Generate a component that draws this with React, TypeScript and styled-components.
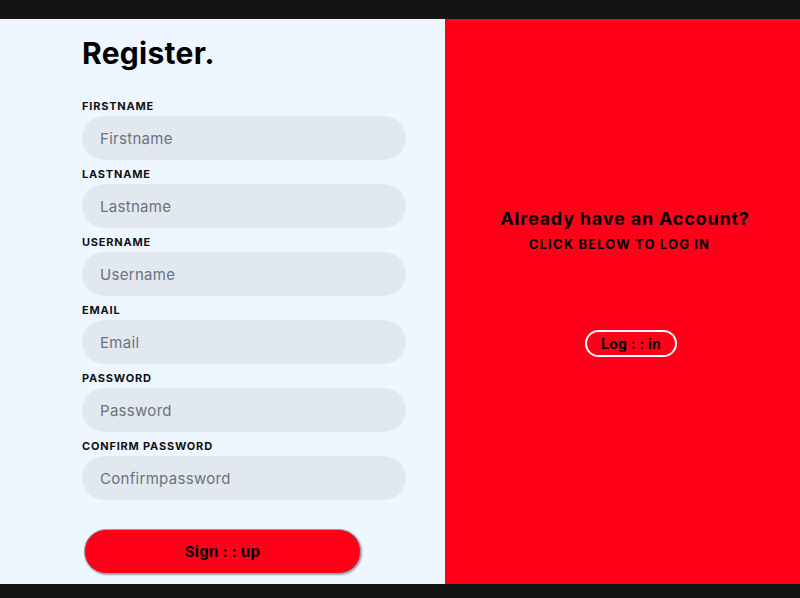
import React from "react";
import styled, { createGlobalStyle } from "styled-components";

const GlobalStyle = createGlobalStyle`
  * { box-sizing: border-box; }
  html, body { margin: 0; padding: 0; background: #141414; }
  body { font-family: Inter, "Noto Sans", sans-serif; }
`;

const fields = [
  { label: "FIRSTNAME", placeholder: "Firstname", type: "text" },
  { label: "LASTNAME", placeholder: "Lastname", type: "text" },
  { label: "USERNAME", placeholder: "Username", type: "text" },
  { label: "EMAIL", placeholder: "Email", type: "email" },
  { label: "PASSWORD", placeholder: "Password", type: "password" },
  { label: "CONFIRM PASSWORD", placeholder: "Confirmpassword", type: "password" },
];

export default function App() {
  return (
    <Page>
      <GlobalStyle />
      <Card>
        <FormSide>
          <Title>Register.</Title>
          <Form onSubmit={(e) => e.preventDefault()}>
            {fields.map((f) => (
              <Field key={f.label}>
                <Label>{f.label}</Label>
                <Input type={f.type} placeholder={f.placeholder} />
              </Field>
            ))}
            <SignUp type="submit">Sign : : up</SignUp>
          </Form>
        </FormSide>
        <AsideSide>
          <Heading>Already have an Account?</Heading>
          <Sub>CLICK BELOW TO LOG IN</Sub>
          <LogIn>Log : : in</LogIn>
        </AsideSide>
      </Card>
    </Page>
  );
}

const Page = styled.div`
  width: 800px;
  height: 598px;
  padding: 19px 0 14px;
  background: #141414;
`;

const Card = styled.div`
  display: grid;
  grid-template-columns: 445px 1fr;
  height: 565px;
`;

const FormSide = styled.section`
  background: #eef6ff;
  padding: 14px 0 0 82px;
`;

const Title = styled.h1`
  margin: 0;
  font-size: 30px;
  font-weight: 700;
  color: #000;
  letter-spacing: 0.3px;
  line-height: 40px;
`;

const Form = styled.form`
  display: flex;
  flex-direction: column;
  gap: 7px;
  margin-top: 26px;
  width: 324px;
`;

const Field = styled.div`
  display: flex;
  flex-direction: column;
  gap: 3px;
`;

const Label = styled.label`
  font-size: 11px;
  font-weight: 700;
  letter-spacing: 0.8px;
  line-height: 14px;
  color: #111;
`;

const Input = styled.input`
  height: 44px;
  border: none;
  border-radius: 22px;
  background: #e2e8f0;
  padding: 0 18px;
  font-family: inherit;
  font-size: 15px;
  letter-spacing: 0.3px;
  color: #111;
  outline: none;
  &::placeholder { color: #6b7280; }
`;

const SignUp = styled.button`
  margin: 22px 0 0 2px;
  width: 277px;
  height: 45px;
  border: 1px solid #9ca3af;
  border-radius: 22px;
  background: #ff0019;
  box-shadow: 1px 1px 2px rgba(0, 0, 0, 0.35);
  font-family: inherit;
  font-size: 15px;
  font-weight: 700;
  letter-spacing: 0.3px;
  color: #000;
`;

const AsideSide = styled.section`
  background: #ff0019;
  display: flex;
  flex-direction: column;
  align-items: center;
  padding-top: 187px;
  color: #000;
`;

const Heading = styled.h2`
  margin: 0 0 0 5px;
  font-size: 18px;
  font-weight: 700;
  letter-spacing: 0.8px;
  line-height: 26px;
`;

const Sub = styled.p`
  margin: 4px 6px 0 0;
  font-size: 13px;
  font-weight: 700;
  letter-spacing: 1.15px;
  line-height: 16px;
`;

const LogIn = styled.button`
  margin: 78px 0 0 17px;
  height: 27px;
  padding: 0 14px;
  border: 2px solid #fff;
  border-radius: 14px;
  background: transparent;
  font-family: inherit;
  font-size: 14px;
  font-weight: 700;
  letter-spacing: 0.3px;
  color: #000;
`;
